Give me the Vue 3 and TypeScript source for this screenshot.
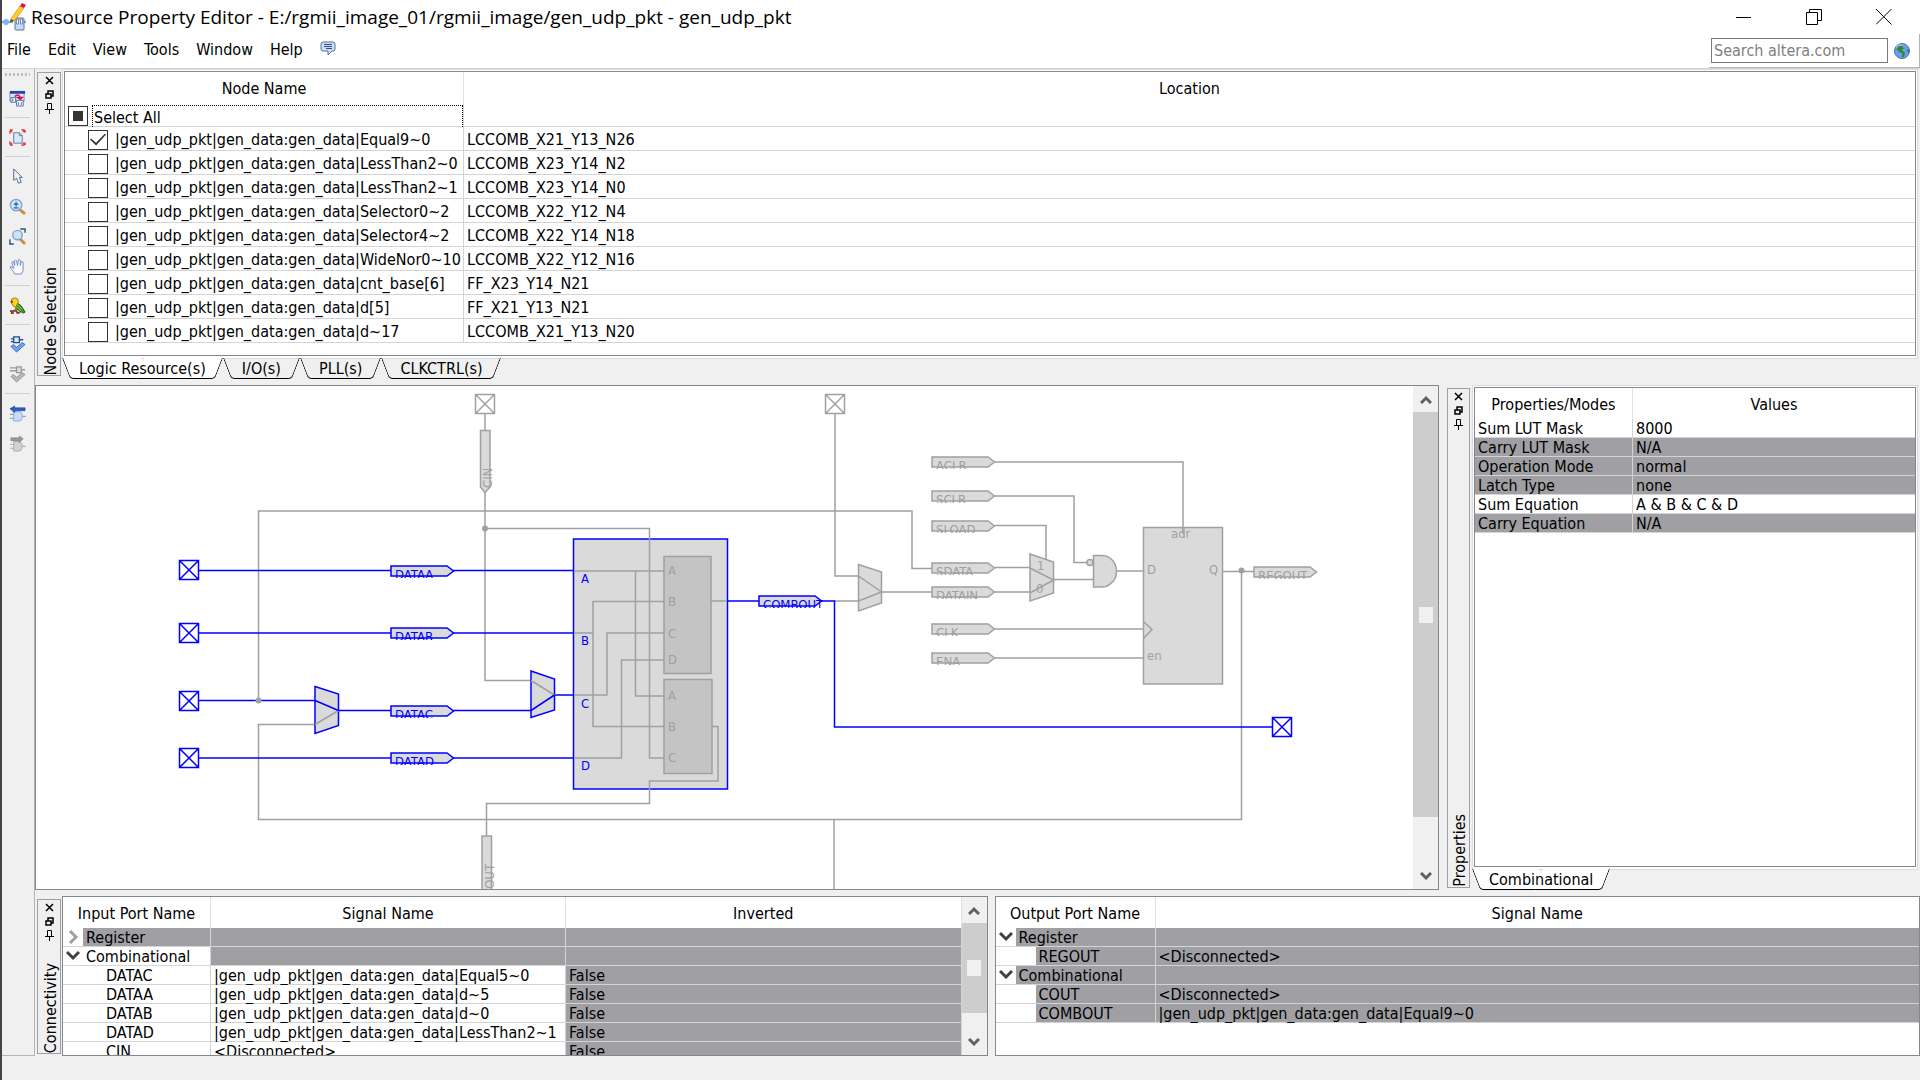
<script setup lang="ts">
interface NodeRow { name: string; location: string; checked: boolean }
interface PropertyRow { name: string; value: string; muted: boolean }
interface PortRow {
  name: string
  signal: string
  inverted?: string
  group?: boolean
  open?: boolean
  mutedName?: boolean
  mutedSignal?: boolean
}
interface Flag { x: number; y: number; label: string; active?: boolean }

const menus = ['File', 'Edit', 'View', 'Tools', 'Window', 'Help']
const tabs = ['Logic Resource(s)', 'I/O(s)', 'PLL(s)', 'CLKCTRL(s)']

const prefix = '|gen_udp_pkt|gen_data:gen_data|'
const nodes: NodeRow[] = [
  { name: 'Equal9~0', location: 'LCCOMB_X21_Y13_N26', checked: true },
  { name: 'LessThan2~0', location: 'LCCOMB_X23_Y14_N2', checked: false },
  { name: 'LessThan2~1', location: 'LCCOMB_X23_Y14_N0', checked: false },
  { name: 'Selector0~2', location: 'LCCOMB_X22_Y12_N4', checked: false },
  { name: 'Selector4~2', location: 'LCCOMB_X22_Y14_N18', checked: false },
  { name: 'WideNor0~10', location: 'LCCOMB_X22_Y12_N16', checked: false },
  { name: 'cnt_base[6]', location: 'FF_X23_Y14_N21', checked: false },
  { name: 'd[5]', location: 'FF_X21_Y13_N21', checked: false },
  { name: 'd~17', location: 'LCCOMB_X21_Y13_N20', checked: false },
]

const properties: PropertyRow[] = [
  { name: 'Sum LUT Mask', value: '8000', muted: false },
  { name: 'Carry LUT Mask', value: 'N/A', muted: true },
  { name: 'Operation Mode', value: 'normal', muted: true },
  { name: 'Latch Type', value: 'none', muted: true },
  { name: 'Sum Equation', value: 'A & B & C & D', muted: false },
  { name: 'Carry Equation', value: 'N/A', muted: true },
]

const inputs: PortRow[] = [
  { name: 'Register', signal: '', inverted: '', group: true, open: false, mutedName: true, mutedSignal: true },
  { name: 'Combinational', signal: '', inverted: '', group: true, open: true, mutedSignal: true },
  { name: 'DATAC', signal: prefix + 'Equal5~0', inverted: 'False' },
  { name: 'DATAA', signal: prefix + 'd~5', inverted: 'False' },
  { name: 'DATAB', signal: prefix + 'd~0', inverted: 'False' },
  { name: 'DATAD', signal: prefix + 'LessThan2~1', inverted: 'False' },
  { name: 'CIN', signal: '<Disconnected>', inverted: 'False' },
]

const outputs: PortRow[] = [
  { name: 'Register', signal: '', group: true, open: true },
  { name: 'REGOUT', signal: '<Disconnected>' },
  { name: 'Combinational', signal: '', group: true, open: true },
  { name: 'COUT', signal: '<Disconnected>' },
  { name: 'COMBOUT', signal: prefix + 'Equal9~0' },
]

// Schematic shapes, in canvas units
const pads = [
  { x: 485, y: 404 }, { x: 835, y: 404 },
  { x: 189, y: 570, active: true }, { x: 189, y: 633, active: true },
  { x: 189, y: 701, active: true }, { x: 189, y: 758, active: true },
  { x: 1282, y: 727, active: true },
]
const flags: Flag[] = [
  { x: 391, y: 566, label: 'DATAA', active: true },
  { x: 391, y: 628, label: 'DATAB', active: true },
  { x: 391, y: 706, label: 'DATAC', active: true },
  { x: 391, y: 753, label: 'DATAD', active: true },
  { x: 759, y: 596, label: 'COMBOUT', active: true },
  { x: 932, y: 457, label: 'ACLR' },
  { x: 932, y: 491, label: 'SCLR' },
  { x: 932, y: 521, label: 'SLOAD' },
  { x: 932, y: 563, label: 'SDATA' },
  { x: 932, y: 587, label: 'DATAIN' },
  { x: 932, y: 624, label: 'CLK' },
  { x: 932, y: 653, label: 'ENA' },
  { x: 1254, y: 567, label: 'REGOUT' },
]
const portLabels = [
  { x: 581, y: 583, t: 'A', active: true }, { x: 581, y: 645, t: 'B', active: true },
  { x: 581, y: 708, t: 'C', active: true }, { x: 581, y: 770, t: 'D', active: true },
  { x: 668, y: 575, t: 'A' }, { x: 668, y: 606, t: 'B' }, { x: 668, y: 638, t: 'C' }, { x: 668, y: 664, t: 'D' },
  { x: 668, y: 700, t: 'A' }, { x: 668, y: 731, t: 'B' }, { x: 668, y: 762, t: 'C' },
  { x: 1037, y: 570, t: '1' }, { x: 1036, y: 593, t: '0' },
  { x: 1171, y: 538, t: 'adr' }, { x: 1147, y: 574, t: 'D' }, { x: 1209, y: 574, t: 'Q' }, { x: 1147, y: 660, t: 'en' },
]
</script>

<template>
  <div class="window">
    <header class="titlebar">
      <svg class="app-icon" viewBox="0 0 24 30" width="24" height="30" aria-hidden="true">
        <path d="M0 20h11M19 20h5" stroke="#8aa0c0" stroke-width="2" />
        <circle cx="4" cy="20" r="3" fill="#7db4f5" />
        <rect x="13" y="16" width="9" height="12" rx="1" fill="#c5daf3" stroke="#55749c" />
        <path d="M14.500 17h2v5h-2zM18.500 17h2v5h-2z" fill="#fff" stroke="#55749c" stroke-width=".8" />
        <path d="M9 17 18 4l4 2-9 12-5 2z" fill="#ffd02e" stroke="#c48810" stroke-width=".7" />
        <path d="m18 4 2-3 4 2-2 3z" fill="#d4144e" />
        <path d="m8 20 1-3 3 2z" fill="#574634" />
      </svg>
      <h1>Resource Property Editor - E:/rgmii_image_01/rgmii_image/gen_udp_pkt - gen_udp_pkt</h1>
      <div class="controls">
        <button type="button" aria-label="Minimize"><svg width="16" height="16"><path d="M0 8.500h15" /></svg></button>
        <button type="button" aria-label="Restore">
          <svg width="16" height="16"><path d="M.5 3.500h11v12h-11zM3.500 3.500v-3h12v11h-4" /></svg>
        </button>
        <button type="button" aria-label="Close"><svg width="16" height="16"><path d="m0 0 15.500 15.500M15.500 0 0 15.500" /></svg></button>
      </div>
    </header>

    <div class="menubar">
      <nav>
        <button v-for="m in menus" :key="m" type="button">{{ m }}</button>
        <button type="button" aria-label="Feedback">
          <svg width="16" height="18" viewBox="0 0 16 18">
            <path d="M3 2h10q2 0 2 2v5q0 2-2 2h-1l-4 4v-4H3q-2 0-2-2V4q0-2 2-2z" fill="#cfdef4" stroke="#5673a0" />
            <path d="M4 4.500h8M4 6.500h8M6 8.500h6" stroke="#2c4f88" />
          </svg>
        </button>
      </nav>
      <form class="search" @submit.prevent>
        <input type="text" placeholder="Search altera.com" aria-label="Search altera.com" />
        <button type="submit" aria-label="Search">
          <svg width="16" height="16" viewBox="0 0 16 16">
            <circle cx="8" cy="8" r="7.500" fill="#6d9cea" stroke="#4a6fc4" />
            <circle cx="6" cy="5" r="4" fill="#a9c9f7" opacity=".6" />
            <path d="m2 6 3-3 4 0 1 3-2 1 3 3-1 4-2 0 0-4-3-1zM13 6l2 1v3l-2-2z" fill="#2f8a3a" />
          </svg>
        </button>
      </form>
    </div>

    <div class="body">
      <div class="toolbar" role="toolbar" aria-label="Editor tools">
        <i class="grip"></i>
        <button type="button" aria-label="Locate"><svg viewBox="0 0 18 18">
          <path d="M1 2h15v10H1z" fill="#dbe6f6" stroke="#7894bf" /><path d="M1 1h16v3H1z" fill="#2346a8" />
          <path d="M2 8h5v5H2zM8 11h7v6H8z" fill="#f4f8ff" stroke="#54709d" /><path d="M4 9v3M10 13v3M13 13v3" stroke="#54709d" />
          <path d="M6 7q4-4 6 1m-3 0h5l-2 2z" fill="none" stroke="#d3124d" stroke-width="1.500" />
        </svg></button>
        <hr />
        <button type="button" aria-label="Fit in window"><svg viewBox="0 0 18 18">
          <path d="M1 5V1h4M13 1h4v4M1 13v4h4M13 17h4v-4M1 1l3 3M17 1l-3 3M1 17l3-3M17 17l-3-3" fill="none" stroke="#e5252b" stroke-width="1.300" stroke-dasharray="3 1" />
          <path d="M5 4h6l3 3v8H5z" fill="#dce8f8" stroke="#5d7aa5" /><path d="M11 4v3h3" fill="none" stroke="#5d7aa5" />
        </svg></button>
        <hr />
        <button type="button" aria-label="Selection tool"><svg viewBox="0 0 18 18">
          <path d="M5 1v12l3-2 2 5 3-1-2-5h3z" fill="#eef3fa" stroke="#4f6288" />
        </svg></button>
        <button type="button" aria-label="Zoom tool"><svg viewBox="0 0 18 18">
          <path d="m11 12 5 4" stroke="#c98a3e" stroke-width="3" stroke-linecap="round" />
          <circle cx="7.500" cy="7.500" r="6" fill="#d3e9fb" stroke="#7da5cf" stroke-width="1.500" />
          <path d="M7.500 4v5M5 6.500h5M5 10.500h5" stroke="#2355ad" stroke-width="1.200" />
        </svg></button>
        <button type="button" aria-label="Zoom to selection"><svg viewBox="0 0 18 18">
          <path d="M12 1h5v4M1 12v5h4" fill="none" stroke="#24518f" stroke-width="1.500" />
          <path d="m12 12 4 4" stroke="#c98a3e" stroke-width="3" stroke-linecap="round" />
          <circle cx="9" cy="7.500" r="5" fill="#cbe4fa" stroke="#86a2c0" stroke-width="1.500" />
        </svg></button>
        <button type="button" aria-label="Hand tool"><svg viewBox="0 0 18 18">
          <path d="M6 17q-1-3-4-6-2-2 0-2l3 2-2-6q0-2 2-1l1 4V3q1-2 2 0l1 5 1-6q2-1 2 1v5l1-4q2-1 2 1v7q0 2-2 5z" fill="#f7faff" stroke="#7088b8" />
        </svg></button>
        <hr />
        <button type="button" aria-label="Find"><svg viewBox="0 0 18 18">
          <path d="M6 8q4-3 8 3l3 5-2 1-5-3q-4-1-4-6z" fill="#3c962f" stroke="#1e5319" /><path d="m8 7 6 6M7 10l6 5" stroke="#a6d341" />
          <path d="M2 5q0-4 4-4t4 4l-3 6-3-2z" fill="#ffd21c" stroke="#a57309" /><path d="M2 5h2" stroke="#56390a" stroke-width="2" />
          <path d="M1 15h4l2-1 2 3 3-1M2 17h3" fill="none" stroke="#82422b" stroke-width="2" />
        </svg></button>
        <hr />
        <button type="button" aria-label="Check netlist"><svg viewBox="0 0 18 18">
          <path d="M5 1h6v6H5zM2 3h3M2 6h3M11 4h4" fill="#dce9f9" stroke="#254d89" stroke-width="1.400" />
          <path d="m2 11 3-2 3 3 6-5 3 2-9 8z" fill="#6da2f3" stroke="#386bc4" />
        </svg></button>
        <button type="button" aria-label="Check and save"><svg viewBox="0 0 18 18">
          <path d="M8 1h5v6H8zM1 2h7M1 5h7M13 4h4" fill="#ddd" stroke="#999" stroke-width="1.400" />
          <path d="m2 11 3-2 3 3 6-5 3 2-9 8z" fill="#b7b7b7" stroke="#969696" />
        </svg></button>
        <hr />
        <button type="button" aria-label="Go to fan-in"><svg viewBox="0 0 18 18">
          <path d="M1 10h4M1 14h4M13 12h5" stroke="#7489ac" /><path d="M5 7h5q4 0 4 5t-4 5H5z" fill="#c9dcf8" stroke="#8ba6d4" />
          <path d="m1 4 5-3v2h11v3H6v2z" fill="#2b5fc4" stroke="#173e90" stroke-width=".6" />
        </svg></button>
        <button type="button" aria-label="Go to fan-out"><svg viewBox="0 0 18 18">
          <path d="M1 10h4M1 14h4M13 12h5" stroke="#aaa" /><path d="M5 7h5q4 0 4 5t-4 5H5z" fill="#d2d2d2" stroke="#aaa" />
          <path d="m15 4-4-3v2H2v3h9v2z" fill="#999" stroke="#777" stroke-width=".6" />
        </svg></button>
      </div>

      <main class="workspace">
        <section class="top">
          <aside class="dock">
            <button type="button" aria-label="Close"><svg width="9" height="9"><path d="m1 1 7 7M8 1 1 8" stroke-width="1.500" /></svg></button>
            <button type="button" aria-label="Float"><svg width="9" height="9"><path d="M1 4h5v4H1zM3 4V1h5v5H6" stroke-width="1.500" /></svg></button>
            <button type="button" aria-label="Pin"><svg width="9" height="11"><path d="M2.500 6V.5h4V6M0 6.500h9M4.500 6v5" /></svg></button>
            <h2>Node Selection</h2>
          </aside>
          <div class="tabbed">
            <div class="panel">
              <div class="frame">
                <table class="grid nodes">
                  <colgroup><col class="c-node" /><col /></colgroup>
                  <thead><tr><th>Node Name</th><th>Location</th></tr></thead>
                  <tbody>
                    <tr>
                      <td class="all"><label><input type="checkbox" class="mixed" /><span>Select All</span></label></td>
                      <td></td>
                    </tr>
                    <tr v-for="n in nodes" :key="n.name">
                      <td><label class="node"><input type="checkbox" :checked="n.checked" />{{ prefix + n.name }}</label></td>
                      <td>{{ n.location }}</td>
                    </tr>
                  </tbody>
                </table>
              </div>
            </div>
            <div class="tabs" role="tablist">
              <button v-for="(t, i) in tabs" :key="t" type="button" role="tab" :class="{ active: i === 0 }"><span>{{ t }}</span></button>
            </div>
          </div>
        </section>

        <section class="middle">
          <div class="schematic">
            <div class="canvas">
              <svg viewBox="36 386 1377 503" width="1377" height="503" role="img" aria-label="Logic cell schematic">
                <g class="wire">
                  <path d="M258.500 701V511H912V568.500H932" />
                  <path d="M485 413V430M485 492V680.500H531" />
                  <path d="M835 413V576H858M834 601H858M882 592H932" />
                  <path d="M315 724.500H258.500V819.500H1241.500V571" />
                  <path d="M834 820V890" />
                  <path d="M995 462H1183V528M995 496H1074V562.500H1087M995 525.500H1046V560" />
                  <path d="M995 567.500H1030M995 592H1030M1053 579.500H1093M1116 571H1144" />
                  <path d="M995 629H1144M995 658H1144M1222 571.500H1254" />
                </g>
                <rect class="cell hot" x="573.500" y="539" width="154" height="250" />
                <rect class="lut" x="664" y="556.500" width="47" height="117" />
                <rect class="lut" x="664" y="679.500" width="48" height="94" />
                <g class="wire">
                  <path d="M485 528.500H649.500V758H664M574 571H664M635.500 571V696H664" />
                  <path d="M574 633H593M664 601.500H593V726.500H664M664 633H607V695H574" />
                  <path d="M664 660H621.500V758H574M711 601H727" />
                  <path d="M712 726.500H718V781H649.500V803.500H486.500V836" />
                </g>
                <g class="wire hot">
                  <path d="M199 570.500H391M453 570.500H573M199 633H391M453 633H573" />
                  <path d="M199 700.500H315M339 710.500H391M453 710.500H531M554 695H573" />
                  <path d="M199 758H391M453 758H573M727 601H759M821 601H834.500V727H1273" />
                </g>
                <path class="cell" d="M858.500 564.500 881.500 572V603L858.500 611ZM858.500 576 881.500 592 858.500 601" />
                <path class="cell" d="M1030 554 1053.500 562V593L1030 601ZM1030 568 1053.500 580 1030 593" />
                <path class="cell hot" d="M315 686.500 338.500 694V725.500L315 733.500Z" />
                <path class="cell hot" d="M531 671 554.500 679V710L531 717.500Z" />
                <path class="wire" d="m315 724.500 23.500-14M531 680.500l23.500 14.500" />
                <path class="wire hot" d="m315 700.500 23.500 10M531 710.500l23.500-15.500" />
                <path class="cell" d="M1093.500 555.500H1102Q1107 555.500 1110 558 1116.500 563 1116.500 571.500T1110 584Q1107 587 1102 587H1093.500Z" />
                <circle class="cell" cx="1090" cy="562.500" r="3" />
                <path class="cell" d="M1143.500 527.500H1222.500V684H1143.500ZM1144 622 1152 629.500 1144 638M1183 528V534" />
                <g class="dot"><circle cx="485" cy="528.500" r="3" /><circle cx="258.500" cy="700.500" r="3" /><circle cx="1241.500" cy="570.500" r="3" /></g>
                <path class="cell" d="M480.500 430.500H490V487L485 492.500 480.500 487ZM482 836H491.500V890H482Z" />
                <text class="note" transform="translate(492 488) rotate(-90)">CIN</text>
                <text class="note" transform="translate(494 897) rotate(-90)">COUT</text>
                <g v-for="(p, i) in pads" :key="'p' + i" :transform="`translate(${p.x} ${p.y})`">
                  <path class="pad" :class="{ hot: p.active }" d="M-9.500-9.500h19v19h-19zl19 19M9.500-9.500l-19 19" />
                </g>
                <g v-for="f in flags" :key="f.label" :transform="`translate(${f.x} ${f.y})`">
                  <path class="cell" :class="{ hot: f.active }" d="M0 0H56L62.500 5 56 10H0Z" />
                  <svg x="0" y="0" width="64" height="12"><text class="note" :class="{ hot: f.active }" x="4" y="13">{{ f.label }}</text></svg>
                </g>
                <text v-for="(l, i) in portLabels" :key="'l' + i" class="note" :class="{ hot: l.active }" :x="l.x" :y="l.y">{{ l.t }}</text>
              </svg>
            </div>
            <div class="scrollbar">
              <button type="button" aria-label="Scroll up"><svg width="12" height="9"><path d="m1 8 5-5 5 5" /></svg></button>
              <div class="thumb"><i></i></div><div class="rest"></div>
              <button type="button" aria-label="Scroll down"><svg width="12" height="9"><path d="m1 1 5 5 5-5" /></svg></button>
            </div>
          </div>
          <aside class="dock">
            <button type="button" aria-label="Close"><svg width="9" height="9"><path d="m1 1 7 7M8 1 1 8" stroke-width="1.500" /></svg></button>
            <button type="button" aria-label="Float"><svg width="9" height="9"><path d="M1 4h5v4H1zM3 4V1h5v5H6" stroke-width="1.500" /></svg></button>
            <button type="button" aria-label="Pin"><svg width="9" height="11"><path d="M2.500 6V.5h4V6M0 6.500h9M4.500 6v5" /></svg></button>
            <h2>Properties</h2>
          </aside>
          <div class="tabbed props">
            <div class="panel">
              <div class="frame">
                <table class="grid dense">
                  <colgroup><col class="c-prop" /><col /></colgroup>
                  <thead><tr><th>Properties/Modes</th><th>Values</th></tr></thead>
                  <tbody>
                    <tr v-for="p in properties" :key="p.name" :class="{ muted: p.muted }">
                      <td>{{ p.name }}</td><td>{{ p.value }}</td>
                    </tr>
                  </tbody>
                </table>
              </div>
            </div>
            <div class="tabs" role="tablist"><button type="button" role="tab" class="active"><span>Combinational</span></button></div>
          </div>
        </section>

        <section class="bottom">
          <aside class="dock">
            <button type="button" aria-label="Close"><svg width="9" height="9"><path d="m1 1 7 7M8 1 1 8" stroke-width="1.500" /></svg></button>
            <button type="button" aria-label="Float"><svg width="9" height="9"><path d="M1 4h5v4H1zM3 4V1h5v5H6" stroke-width="1.500" /></svg></button>
            <button type="button" aria-label="Pin"><svg width="9" height="11"><path d="M2.500 6V.5h4V6M0 6.500h9M4.500 6v5" /></svg></button>
            <h2>Connectivity</h2>
          </aside>
          <div class="ports">
            <div class="frame split">
              <div class="clip">
                <table class="grid dense">
                  <colgroup><col class="c-in" /><col class="c-sig" /><col /></colgroup>
                  <thead><tr><th>Input Port Name</th><th>Signal Name</th><th class="last">Inverted</th></tr></thead>
                  <tbody>
                    <tr v-for="r in inputs" :key="r.name">
                      <td class="tree">
                        <div>
                          <button v-if="r.group" type="button" :aria-label="'Toggle ' + r.name">
                            <svg width="14" height="14" :class="{ closed: !r.open }"><path :d="r.open ? 'm1 3 6 6 6-6' : 'm4 1 6 6-6 6'" /></svg>
                          </button>
                          <i v-else></i>
                          <span :class="{ muted: r.mutedName }">{{ r.name }}</span>
                        </div>
                      </td>
                      <td :class="{ muted: r.mutedSignal }">{{ r.signal }}</td>
                      <td class="muted last">{{ r.inverted }}</td>
                    </tr>
                  </tbody>
                </table>
              </div>
              <div class="scrollbar">
                <button type="button" aria-label="Scroll up"><svg width="12" height="9"><path d="m1 8 5-5 5 5" /></svg></button>
                <div class="thumb short"><i></i></div><div class="rest short"></div>
                <button type="button" aria-label="Scroll down"><svg width="12" height="9"><path d="m1 1 5 5 5-5" /></svg></button>
              </div>
            </div>
            <div class="frame">
              <table class="grid dense">
                <colgroup><col class="c-out" /><col /></colgroup>
                <thead><tr><th>Output Port Name</th><th>Signal Name</th></tr></thead>
                <tbody>
                  <tr v-for="r in outputs" :key="r.name">
                    <td class="tree">
                      <div>
                        <button v-if="r.group" type="button" :aria-label="'Toggle ' + r.name">
                          <svg width="14" height="14"><path d="m1 3 6 6 6-6" /></svg>
                        </button>
                        <i v-else></i>
                        <span class="muted">{{ r.name }}</span>
                      </div>
                    </td>
                    <td class="muted">{{ r.signal }}</td>
                  </tr>
                </tbody>
              </table>
            </div>
          </div>
        </section>
      </main>
    </div>
    <footer class="status"></footer>
  </div>
</template>

<style>
body { margin: 0; }
</style>

<style scoped>
* { box-sizing: border-box; }
.window {
  min-height: 100vh;
  display: flex;
  flex-direction: column;
  border-left: 2px solid #444;
  background: #f0f0f0;
  color: #000;
  font: 16px/19px "DejaVu Sans Condensed", "Noto Sans", sans-serif;
}
button { padding: 0; border: 0; background: none; color: inherit; font: inherit; }
svg { display: block; }
h1, h2 { margin: 0; font-weight: 400; }

.titlebar { height: 34px; display: flex; align-items: center; background: #fff; }
h1 { margin-left: 5px; font-family: "Open Sans", "Noto Sans", sans-serif; font-size: 19px; line-height: 34px; white-space: nowrap; }
.controls { margin-left: auto; display: flex; gap: 24px; padding-right: 13px; }
.controls button { width: 46px; height: 30px; display: grid; place-items: center; }
.controls path { fill: none; stroke: #000; }

.menubar { height: 35px; display: flex; justify-content: space-between; background: #fff; border-bottom: 1px solid #d4d4d4; }
nav { display: flex; align-items: flex-start; gap: 17px; padding: 6px 0 0 5px; line-height: 20px; }
.search { display: flex; align-items: center; gap: 6px; padding: 0 9px 0 2px; height: 34px; border-right: 1px solid #b4b4b4; border-bottom: 1px solid #b4b4b4; }
.search input { width: 177px; height: 25px; padding: 0 2px; border: 1px solid #7a7a7a; font: inherit; background: #fff; }
.search input::placeholder { color: #808080; opacity: 1; }

.body { flex: 1; display: flex; }
.toolbar { width: 33px; flex: none; border-right: 1px solid #b4b4b4; border-bottom: 1px solid #b4b4b4; display: flex; flex-direction: column; padding: 4px 4px 0 3px; }
.toolbar .grip { height: 3px; margin-bottom: 7px; background: repeating-linear-gradient(90deg, #bdbdbd 0 2px, transparent 2px 4px); }
.toolbar button { height: 30px; display: grid; place-items: center; }
.toolbar svg { width: 17px; height: 17px; }
.toolbar hr { width: 100%; height: 9px; margin: 0; border: 0; background: linear-gradient(#d0d0d0, #d0d0d0) center / 100% 1px no-repeat; }

.workspace { flex: 1; min-width: 0; display: flex; flex-direction: column; }
.top { display: flex; gap: 1px; padding: 0 2px 6px 2px; }
.middle { flex: 1; display: flex; }
.bottom { height: 160px; margin-top: 6px; display: flex; gap: 1px; padding-left: 2px; }

.dock { width: 24px; flex: none; display: flex; flex-direction: column; align-items: center; border: 1px solid #a0a0a0; margin: 3px 0; }
.dock button { height: 14px; width: 14px; display: grid; place-items: center; }
.dock path { fill: none; stroke: #000; }
.dock h2 { margin-top: auto; align-self: flex-end; font-size: 16px; line-height: 18px; writing-mode: vertical-rl; transform: rotate(180deg); white-space: nowrap; }
.middle .dock { margin: 3px 2px 2px 8px; width: 23px; }
.bottom .dock { margin: 3px 0 2px; }

.tabbed { flex: 1; min-width: 0; display: flex; flex-direction: column; }
.panel { flex: 1; display: flex; flex-direction: column; border: 1px solid #dcdcdc; padding: 1px 1px 2px; background: #fff; }
.frame { flex: 1; min-width: 0; min-height: 0; overflow: hidden; border: 1px solid #828790; background: #fff; }
.top .frame { min-height: 285px; }
.props { flex: 0 0 446px; margin-right: 2px; }

.tabs { display: flex; gap: 8px; padding-left: 4px; }
.tabs button { position: relative; height: 20px; padding: 0 15px; line-height: 20px; }
.tabs button.active { padding: 0 13px; }
.tabs button::before, .tabs button::after { content: ""; position: absolute; top: -1px; bottom: 0; width: 51%; border-bottom: 1px solid #000; }
.tabs button::before { left: 0; border-left: 1px solid #000; border-bottom-left-radius: 4px; transform: skewX(21deg); }
.tabs button::after { right: 0; border-right: 1px solid #000; border-bottom-right-radius: 4px; transform: skewX(-21deg); }
.tabs button.active::before, .tabs button.active::after { background: #fff; }
.tabs span { position: relative; z-index: 1; }

.grid { width: 100%; border-collapse: separate; border-spacing: 0; table-layout: fixed; }
.c-node { width: 399px; }
.c-prop { width: 158px; }
.c-in { width: 148px; }
.c-sig { width: 355px; }
.c-out { width: 160px; }
.grid th { height: 31px; padding: 2px 0 0; font-weight: 400; text-align: center; border-right: 1px solid #e2e2e2; }
.grid td { height: 24px; padding: 1px 3px 0; border-right: 1px solid #d4d4d4; box-shadow: inset 0 -1px #d4d4d4; white-space: nowrap; overflow: hidden; }
.grid th:last-child:not(.last), .grid td:last-child:not(.last) { border-right: 0; }
.grid.dense td { height: 19px; line-height: 18px; }
.muted, .muted td { background: #a0a0a4; }
.grid.dense td.tree { padding: 0 0 1px; }
.tree div { display: flex; height: 18px; }
.tree button, .tree i { flex: none; width: 20px; display: grid; place-items: center; }
.tree i { width: 40px; }
.tree span { flex: 1; padding-left: 3px; line-height: 20px; overflow: hidden; }
.tree path { fill: none; stroke: #404040; stroke-width: 3; }
.tree .closed path { stroke: #a0a0a0; }

.nodes label { display: flex; align-items: center; height: 23px; }
.nodes .node { padding-left: 20px; gap: 7px; }
.nodes td.all { padding: 1px 0 0 3px; }
.all label { gap: 4px; }
.all span { flex: 1; height: 22px; line-height: 23px; padding-left: 1px; border: 1px dotted #000; border-bottom: 0; }
.nodes input { appearance: none; flex: none; width: 20px; height: 20px; margin: 0; border: 1px solid #333; background: #fff; display: grid; place-items: center; }
.nodes input.mixed::before { content: ""; width: 10px; height: 10px; background: #333; }
.nodes input:checked::before { content: ""; width: 16px; height: 12px; background: #333; clip-path: polygon(0 50%, 6% 42%, 38% 78%, 94% 0, 100% 8%, 38% 100%); }

.schematic { flex: 1; min-width: 0; min-height: 505px; display: flex; border: 1px solid #828790; background: #fff; }
.canvas { flex: 1; min-width: 0; overflow: hidden; }
.wire, .pad { fill: none; stroke: #a0a0a0; stroke-width: 1.500; }
.cell { fill: #dadada; stroke: #a0a0a0; stroke-width: 1.500; }
.lut { fill: #c4c4c4; stroke: #a0a0a0; stroke-width: 1.500; }
.wire.hot, .cell.hot, .pad.hot { stroke: #00f; }
.dot { fill: #a0a0a0; }
.note { font-size: 13px; fill: #a0a0a0; }
.note.hot { fill: #00f; }

.scrollbar { flex: none; width: 25px; display: flex; flex-direction: column; background: #f0f0f0; }
.scrollbar button { height: 26px; flex: none; display: grid; place-items: center; }
.scrollbar path { fill: none; stroke: #606060; stroke-width: 3; }
.thumb { flex: 405; display: grid; place-items: center; background: #cdcdcd; }
.rest { flex: 46; }
.thumb.short { flex: 90; }
.rest.short { flex: 16; }
.thumb i { width: 14px; height: 16px; background: #f0f0f0; }

.ports { flex: 1; min-width: 0; display: grid; grid-template-columns: 1fr 1fr; grid-template-rows: 100%; gap: 7px; }
.split { display: flex; }
.clip { flex: 1; min-width: 0; overflow: hidden; }
.status { height: 24px; }
</style>
